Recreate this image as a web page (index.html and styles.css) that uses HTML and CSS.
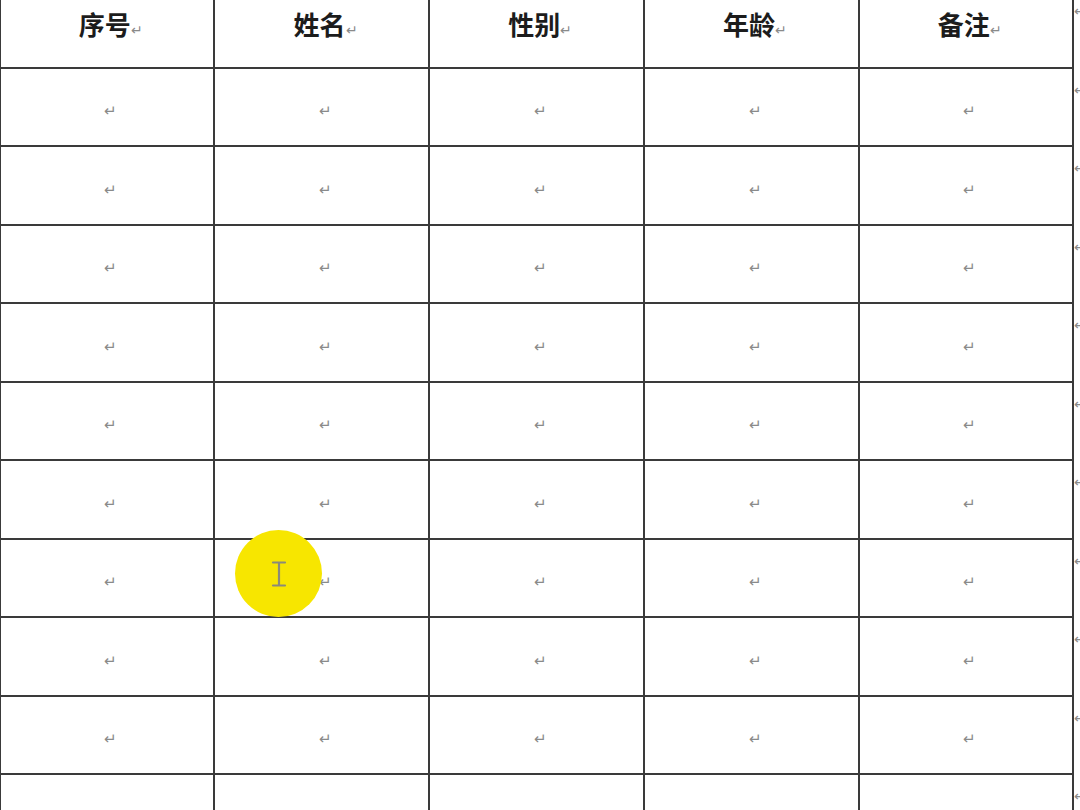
FILE: index.html
```html
<!DOCTYPE html>
<html lang="zh-CN">
<head>
<meta charset="utf-8">
<title>表格</title>
<link rel="stylesheet" href="styles.css">
</head>
<body>
<div class="page">
<table class="grid">
  <colgroup>
    <col class="c"><col class="c"><col class="c"><col class="c"><col class="c"><col class="end">
  </colgroup>
  <tr class="head">
    <th>序号<span class="pm">↵</span></th>
    <th>姓名<span class="pm">↵</span></th>
    <th>性别<span class="pm">↵</span></th>
    <th>年龄<span class="pm">↵</span></th>
    <th>备注<span class="pm">↵</span></th>
    <td class="rowend">↵</td>
  </tr>
  <tr><td>↵</td><td>↵</td><td>↵</td><td>↵</td><td>↵</td><td class="rowend">↵</td></tr>
  <tr><td>↵</td><td>↵</td><td>↵</td><td>↵</td><td>↵</td><td class="rowend">↵</td></tr>
  <tr><td>↵</td><td>↵</td><td>↵</td><td>↵</td><td>↵</td><td class="rowend">↵</td></tr>
  <tr><td>↵</td><td>↵</td><td>↵</td><td>↵</td><td>↵</td><td class="rowend">↵</td></tr>
  <tr><td>↵</td><td>↵</td><td>↵</td><td>↵</td><td>↵</td><td class="rowend">↵</td></tr>
  <tr><td>↵</td><td>↵</td><td>↵</td><td>↵</td><td>↵</td><td class="rowend">↵</td></tr>
  <tr><td>↵</td><td>↵</td><td>↵</td><td>↵</td><td>↵</td><td class="rowend">↵</td></tr>
  <tr><td>↵</td><td>↵</td><td>↵</td><td>↵</td><td>↵</td><td class="rowend">↵</td></tr>
  <tr><td>↵</td><td>↵</td><td>↵</td><td>↵</td><td>↵</td><td class="rowend">↵</td></tr>
  <tr><td>↵</td><td>↵</td><td>↵</td><td>↵</td><td>↵</td><td class="rowend">↵</td></tr>
</table>
<div class="cursor-spot">
  <svg width="16" height="28" viewBox="0 0 16 28" aria-hidden="true">
    <path d="M2 2.5 H14 M2 25.5 H14 M8 2.5 V25.5" stroke="#8a8a7a" stroke-width="2.2" fill="none" stroke-linecap="round"/>
  </svg>
</div>
</div>
</body>
</html>
```

FILE: styles.css
```css
html, body {
  margin: 0;
  padding: 0;
  background: #ffffff;
  overflow: hidden;
  width: 1080px;
  height: 810px;
}

.page {
  position: relative;
  width: 1080px;
  height: 810px;
  overflow: hidden;
}

.grid {
  border-collapse: collapse;
  table-layout: fixed;
  width: 1094px;
  margin-top: -12px;
  margin-left: -1.5px;
  font-family: "Noto Sans CJK SC", "Noto Sans", sans-serif;
}

.grid col.c {
  width: 214.75px;
}

.grid col.end {
  width: 20px;
}

.grid tr {
  height: 78.5px;
}

.grid th,
.grid td {
  border: 2px solid #3a3a3a;
  padding: 0 0 0 8px;
  text-align: center;
  vertical-align: middle;
  color: #8a8a8a;
  font-size: 15px;
  line-height: 1;
}

.grid th {
  color: #1c1c1c;
  font-size: 26px;
  font-weight: 700;
  padding: 0 0 8px 8px;
}

.grid tr:not(.head) td {
  padding-top: 6px;
}

.pm {
  font-size: 14px;
  font-weight: 400;
  color: #8a8a8a;
  margin-left: 0;
}

.grid td.rowend {
  border: none;
  text-align: left;
  vertical-align: top;
  padding: 14px 0 0 0;
  color: #8a8a8a;
  font-size: 14px;
}

.grid tr:not(.head) td.rowend {
  padding-top: 14px;
}

.cursor-spot {
  position: absolute;
  left: 235px;
  top: 530px;
  width: 87px;
  height: 87px;
  border-radius: 50%;
  background: #f7e600;
  display: flex;
  align-items: center;
  justify-content: center;
}

.cursor-spot svg {
  display: block;
}
```
